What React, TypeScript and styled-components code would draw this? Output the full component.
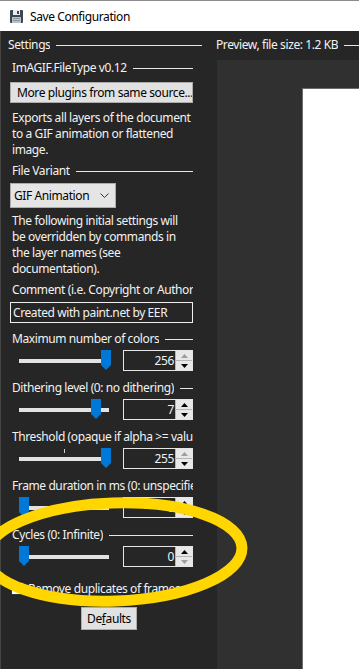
import React from "react";
import styled, { createGlobalStyle } from "styled-components";

const Global = createGlobalStyle`
  html, body { margin: 0; padding: 0; background: #262626; }
  body { font-family: "Noto Sans", "Liberation Sans", sans-serif; }
`;

const Window = styled.div`
  position: relative;
  width: 359px;
  height: 669px;
  overflow: hidden;
  display: flex;
  flex-direction: column;
  font-family: "Noto Sans", "Liberation Sans", sans-serif;
  font-size: 12px;
  letter-spacing: -0.4px;
  color: #f2f2f2;
`;

const TitleBar = styled.div`
  flex: none;
  height: 30px;
  border-top: 1px solid #8c8c8c;
  background: #ffffff;
  display: flex;
  align-items: center;
  gap: 6px;
  padding-left: 8px;
  color: #000;
  font-size: 12px;
`;

const Body = styled.div`
  flex: 1;
  display: flex;
  background: #262626;
  border-left: 1px solid #454545;
  min-height: 0;
`;

const SettingsPanel = styled.div`
  width: 201px;
  flex: none;
  display: flex;
  flex-direction: column;
  padding-top: 6px;
`;

const HeaderRow = styled.div<{ $indent?: number; $top?: number }>`
  display: flex;
  align-items: center;
  height: 16px;
  line-height: 16px;
  padding-left: ${(p) => p.$indent ?? 0}px;
  margin-top: ${(p) => p.$top ?? 0}px;
  white-space: nowrap;
  overflow: hidden;
`;

const HeaderText = styled.span`
  flex: 0 1 auto;
  overflow: hidden;
  white-space: nowrap;
`;

const Rule = styled.div`
  flex: 1 0 0;
  min-width: 0;
  height: 1px;
  background: #e6e6e6;
  margin-left: 6px;
`;

const Inner = styled.div`
  display: flex;
  flex-direction: column;
  padding: 0 9px 0 9px;
`;

const PushButton = styled.div<{ $width?: number; $left?: number; $top?: number; $h?: number }>`
  box-sizing: border-box;
  height: ${(p) => p.$h ?? 21}px;
  width: ${(p) => (p.$width ? `${p.$width}px` : "auto")};
  margin-left: ${(p) => p.$left ?? 0}px;
  margin-top: ${(p) => p.$top ?? 0}px;
  background: #e1e1e1;
  border: 1px solid #adadad;
  color: #000;
  display: flex;
  align-items: center;
  justify-content: ${(p) => (p.$width ? "center" : "flex-start")};
  padding-left: ${(p) => (p.$width ? 0 : 6)}px;
  white-space: nowrap;
  overflow: hidden;
`;

const Para = styled.div<{ $top?: number }>`
  margin-top: ${(p) => p.$top ?? 0}px;
  padding-left: 2px;
  line-height: 16px;
  white-space: nowrap;
`;

const Select = styled.div`
  box-sizing: border-box;
  margin-top: 4px;
  width: 106px;
  height: 25px;
  background: #e5e5e5;
  border: 1px solid #adadad;
  color: #000;
  display: flex;
  align-items: center;
  justify-content: space-between;
  padding: 0 6px 0 3px;
`;

const TextInput = styled.div`
  box-sizing: border-box;
  margin-top: 4px;
  height: 21px;
  border: 1px solid #f0f0f0;
  background: #262626;
  display: flex;
  align-items: center;
  padding-left: 2px;
  white-space: nowrap;
  overflow: hidden;
`;

const SliderRow = styled.div`
  margin-top: 3px;
  height: 21px;
  display: flex;
  justify-content: space-between;
  align-items: flex-start;
`;

const SliderBox = styled.div`
  position: relative;
  width: 112px;
  height: 21px;
  box-sizing: border-box;
  padding: 9px 0 0 9px;
`;

const Track = styled.div`
  width: 90px;
  height: 4px;
  background: #e2e2e2;
`;

const Thumb = styled.svg`
  position: absolute;
  top: 0;
`;

const Tick = styled.div`
  position: absolute;
  top: 1px;
  width: 1px;
  height: 4px;
  background: #cfcfcf;
`;

const SpinBox = styled.div`
  box-sizing: border-box;
  width: 70px;
  height: 21px;
  border: 1px solid #e6e6e6;
  background: #262626;
  display: flex;
`;

const SpinValue = styled.div`
  flex: 1;
  text-align: right;
  line-height: 19px;
  padding-right: 1px;
`;

const SpinButtons = styled.div`
  width: 16px;
  display: flex;
  flex-direction: column;
  background: #e8e8e8;
  border-left: 1px solid #b5b5b5;
`;

const SpinBtn = styled.div`
  flex: 1;
  display: flex;
  align-items: center;
  justify-content: center;
  & + & {
    border-top: 1px solid #b5b5b5;
  }
`;

const CheckRow = styled.div`
  margin-top: 13px;
  height: 16px;
  display: flex;
  align-items: center;
  gap: 4px;
  padding-left: 1px;
`;

const CheckBox = styled.div`
  box-sizing: border-box;
  width: 13px;
  height: 13px;
  background: #fff;
  border: 1px solid #333;
  display: flex;
  align-items: center;
  justify-content: center;
`;

const PreviewColumn = styled.div`
  flex: 1;
  display: flex;
  flex-direction: column;
  padding-top: 6px;
  min-width: 0;
`;

const PreviewBox = styled.div`
  flex: 1;
  margin: 7px 0 0 15px;
  background: #303030;
  display: flex;
  padding: 28px 0 0 85px;
`;

const Paper = styled.div`
  flex: 1;
  background: #ffffff;
  border-left: 1px solid #6b6b6b;
  border-top: 1px solid #6b6b6b;
`;

const Annotation = styled.svg`
  position: absolute;
  left: 0;
  top: 0;
  pointer-events: none;
`;

const Arrow = ({ up, gray }: { up: boolean; gray?: boolean }) => (
  <svg width="7" height="4" viewBox="0 0 7 4">
    <polygon points={up ? "3.5,0 7,4 0,4" : "0,0 7,0 3.5,4"} fill={gray ? "#9e9e9e" : "#000"} />
  </svg>
);

const Floppy = () => (
  <svg width="16" height="16" viewBox="0 0 16 16">
    <rect x="2" y="2" width="13" height="13" rx="1" fill="#3d4651" />
    <rect x="5" y="2" width="7" height="5" fill="#e9edf1" />
    <rect x="9" y="3" width="2" height="3" fill="#3d4651" />
    <rect x="4" y="9" width="9" height="6" fill="#b9c0c8" />
    <rect x="5" y="10" width="7" height="1" fill="#8e969f" />
    <rect x="5" y="12" width="7" height="1" fill="#8e969f" />
  </svg>
);

type SliderDef = {
  label: string;
  value: string;
  frac: number;
  line: boolean;
  upGray?: boolean;
  downGray?: boolean;
  tick?: number;
};

const sliders: SliderDef[] = [
  { label: "Maximum number of colors", value: "256", frac: 1, line: true, upGray: true },
  { label: "Dithering level (0: no dithering)", value: "7", frac: 7 / 8, line: true },
  { label: "Threshold (opaque if alpha >= value)", value: "255", frac: 1, line: false, upGray: true, tick: 54 },
  { label: "Frame duration in ms (0: unspecified)", value: "0", frac: 0, line: false },
  { label: "Cycles (0: Infinite)", value: "0", frac: 0, line: true, downGray: true },
];

const SliderBlock = ({ s, first }: { s: SliderDef; first: boolean }) => (
  <>
    <HeaderRow $indent={2} $top={first ? 8 : 9}>
      <HeaderText>{s.label}</HeaderText>
      {s.line && <Rule />}
    </HeaderRow>
    <SliderRow>
      <SliderBox>
        <Track />
        {s.tick !== undefined && <Tick style={{ left: s.tick }} />}
        <Thumb width="10" height="20" viewBox="0 0 10 20" style={{ left: 9 + s.frac * 82 }}>
          <polygon points="0,0 10,0 10,15 5,20 0,15" fill="#0078d7" />
        </Thumb>
      </SliderBox>
      <SpinBox>
        <SpinValue>{s.value}</SpinValue>
        <SpinButtons>
          <SpinBtn>
            <Arrow up gray={s.upGray} />
          </SpinBtn>
          <SpinBtn>
            <Arrow up={false} gray={s.downGray} />
          </SpinBtn>
        </SpinButtons>
      </SpinBox>
    </SliderRow>
  </>
);

export default function App() {
  return (
    <Window>
      <Global />
      <TitleBar>
        <Floppy />
        <span>Save Configuration</span>
      </TitleBar>
      <Body>
        <SettingsPanel>
          <HeaderRow $indent={7}>
            <HeaderText>Settings</HeaderText>
            <Rule />
          </HeaderRow>
          <Inner>
            <HeaderRow $indent={2} $top={7}>
              <HeaderText>ImAGIF.FileType v0.12</HeaderText>
              <Rule />
            </HeaderRow>
            <PushButton $top={6}>More plugins from same source...</PushButton>
            <Para $top={7}>
              Exports all layers of the document
              <br />
              to a GIF animation or flattened
              <br />
              image.
            </Para>
            <HeaderRow $indent={2} $top={5}>
              <HeaderText>File Variant</HeaderText>
              <Rule />
            </HeaderRow>
            <Select>
              <span>GIF Animation</span>
              <svg width="9" height="5" viewBox="0 0 9 5">
                <polyline points="0.5,0.5 4.5,4.5 8.5,0.5" fill="none" stroke="#333" strokeWidth="1" />
              </svg>
            </Select>
            <Para $top={5}>
              The following initial settings will
              <br />
              be overridden by commands in
              <br />
              the layer names (see
              <br />
              documentation).
            </Para>
            <HeaderRow $indent={2} $top={5}>
              <HeaderText>Comment (i.e. Copyright or Author)</HeaderText>
            </HeaderRow>
            <TextInput>Created with paint.net by EER</TextInput>
            {sliders.map((s, i) => (
              <SliderBlock key={s.label} s={s} first={i === 0} />
            ))}
            <CheckRow>
              <CheckBox>
                <svg width="9" height="8" viewBox="0 0 9 8">
                  <polyline points="1,4 3.5,6.5 8,1" fill="none" stroke="#222" strokeWidth="1.4" />
                </svg>
              </CheckBox>
              <span>Remove duplicates of frames</span>
            </CheckRow>
            <PushButton $width={56} $left={71} $top={11} $h={23}>
              <span>
                De<u>f</u>aults
              </span>
            </PushButton>
          </Inner>
        </SettingsPanel>
        <PreviewColumn>
          <HeaderRow $indent={14}>
            <HeaderText>Preview, file size: 1.2 KB</HeaderText>
            <Rule />
          </HeaderRow>
          <PreviewBox>
            <Paper />
          </PreviewBox>
        </PreviewColumn>
      </Body>
      <Annotation width="359" height="669" viewBox="0 0 359 669">
        <ellipse
          cx="114"
          cy="552"
          rx="128"
          ry="49"
          transform="rotate(-2 114 552)"
          fill="none"
          stroke="#ffd600"
          strokeWidth="11"
        />
      </Annotation>
    </Window>
  );
}
